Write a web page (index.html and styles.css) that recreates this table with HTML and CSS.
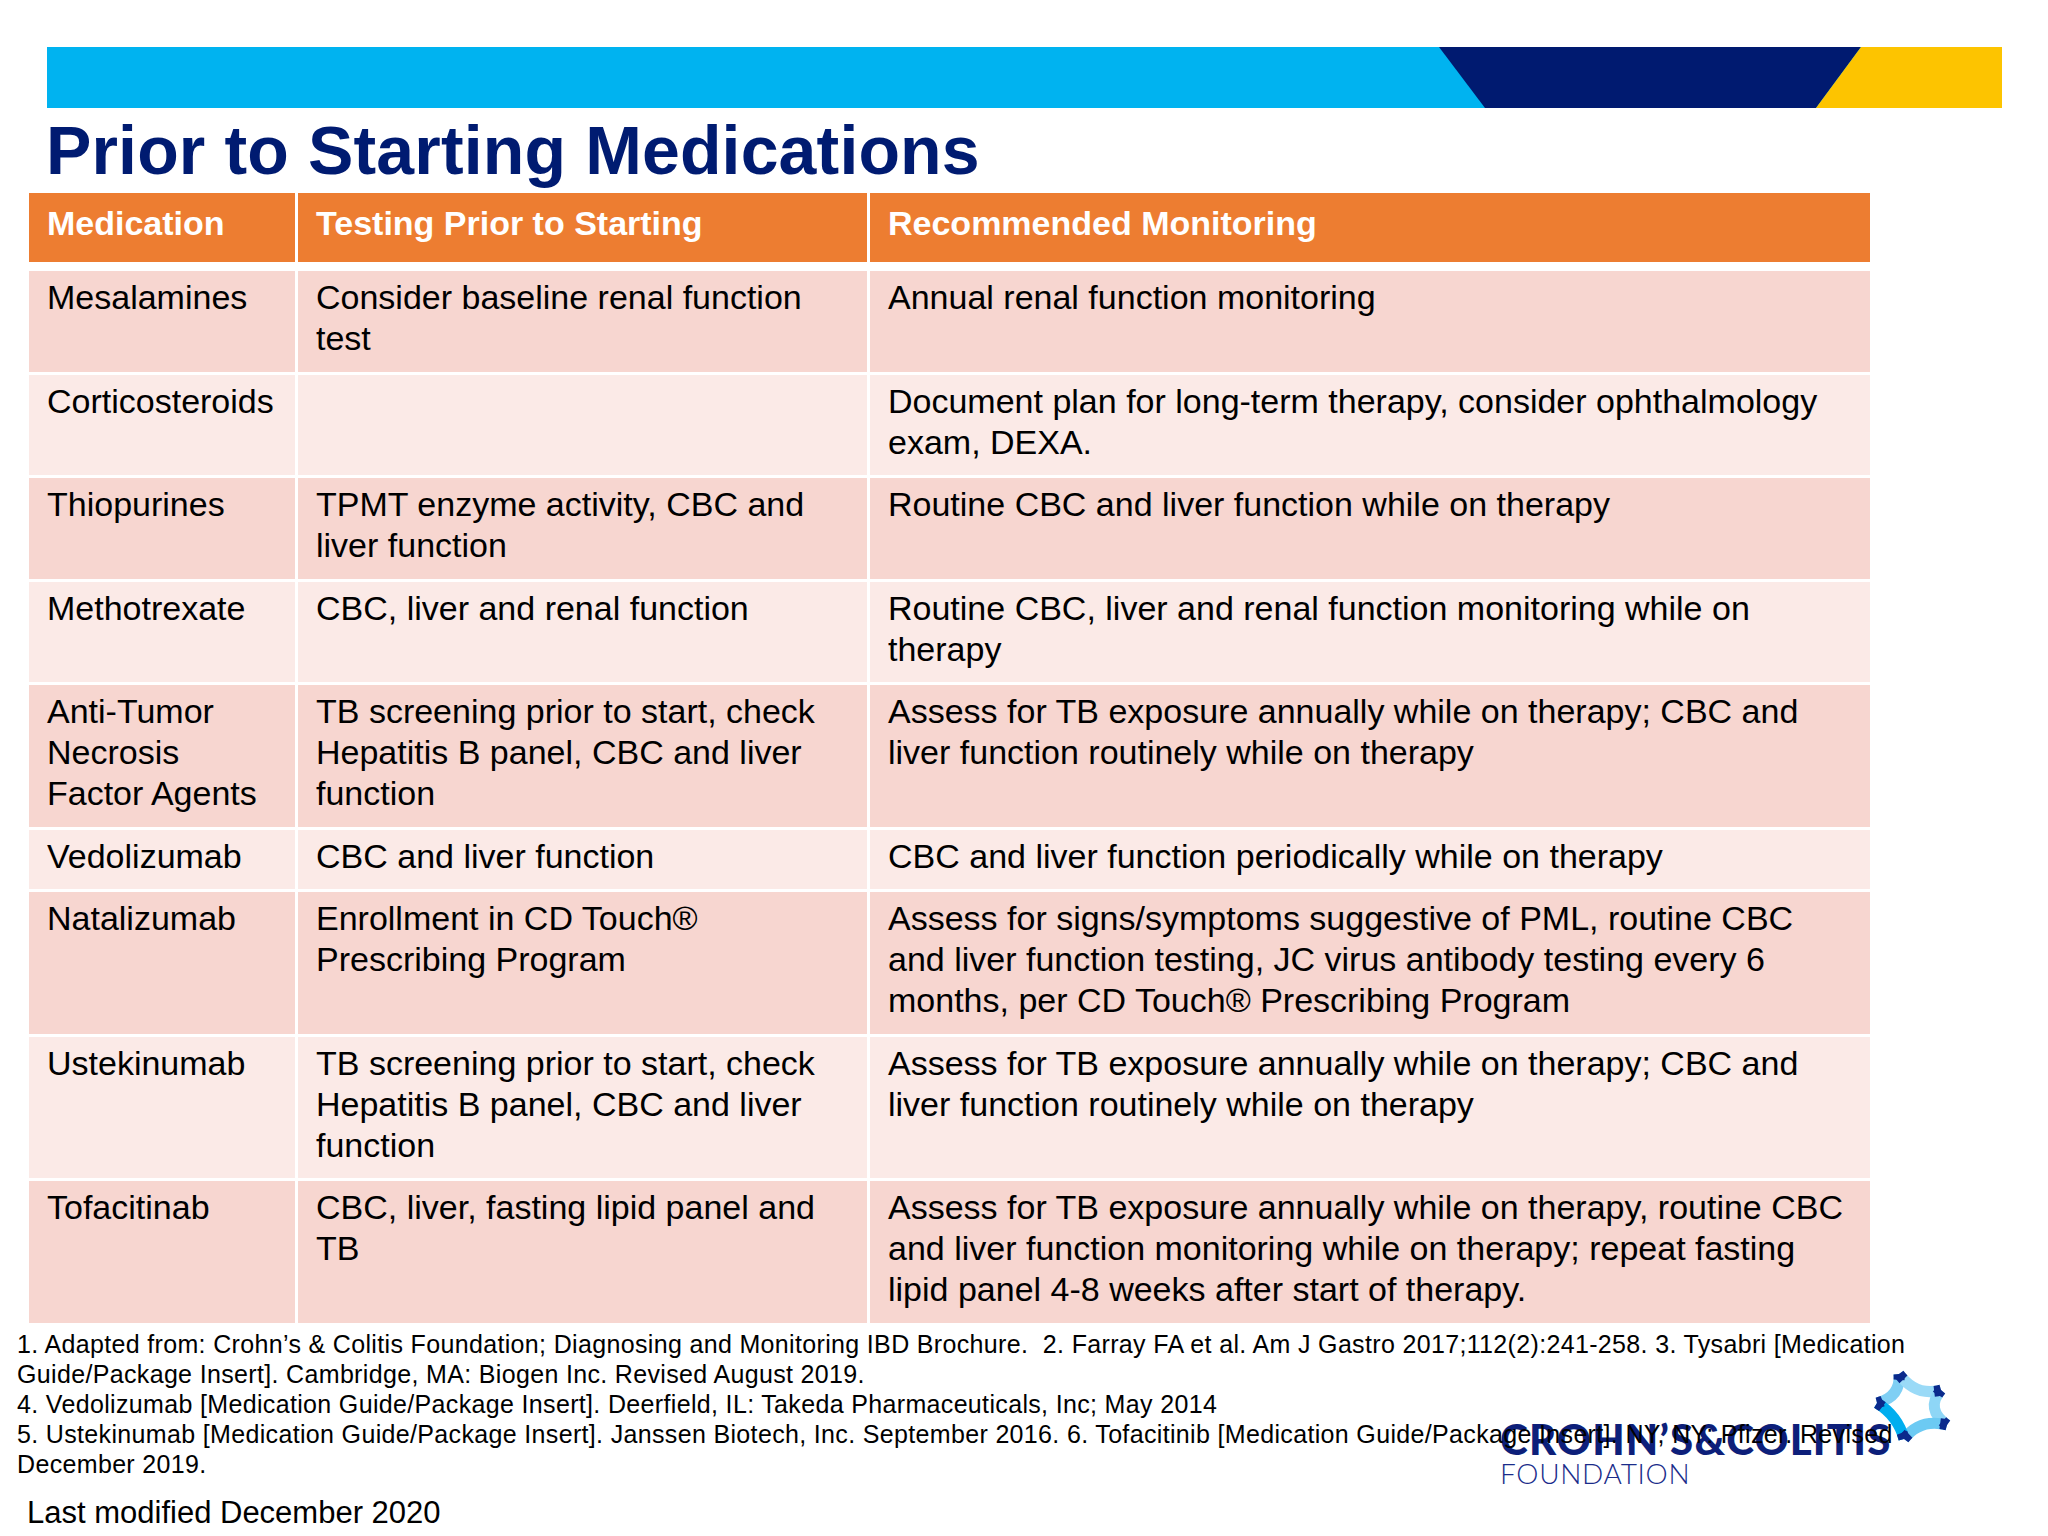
FILE: index.html
```html
<!DOCTYPE html>
<html lang="en">
<head>
<meta charset="utf-8">
<title>Prior to Starting Medications</title>
<link rel="stylesheet" href="styles.css">
</head>
<body>
<div class="slide">
  <svg class="banner" width="1955" height="61" viewBox="0 0 1955 61" aria-hidden="true">
    <rect x="0" y="0" width="1955" height="61" fill="#00B3F0"/>
    <polygon points="1392,0 1814,0 1769,61 1438,61" fill="#001A70"/>
    <polygon points="1814,0 1955,0 1955,61 1769,61" fill="#FDC400"/>
  </svg>

  <h1 class="title">Prior to Starting Medications</h1>

  <div class="table">
    <div class="row head">
      <div class="cell">Medication</div>
      <div class="cell">Testing Prior to Starting</div>
      <div class="cell">Recommended Monitoring</div>
    </div>
    <div class="row odd">
      <div class="cell">Mesalamines</div>
      <div class="cell">Consider baseline renal function test</div>
      <div class="cell">Annual renal function monitoring</div>
    </div>
    <div class="row even">
      <div class="cell">Corticosteroids</div>
      <div class="cell"></div>
      <div class="cell">Document plan for long-term therapy, consider ophthalmology exam, DEXA.</div>
    </div>
    <div class="row odd">
      <div class="cell">Thiopurines</div>
      <div class="cell">TPMT enzyme activity, CBC and liver function</div>
      <div class="cell">Routine CBC and liver function while on therapy</div>
    </div>
    <div class="row even">
      <div class="cell">Methotrexate</div>
      <div class="cell">CBC, liver and renal function</div>
      <div class="cell">Routine CBC, liver and renal function monitoring while on therapy</div>
    </div>
    <div class="row odd">
      <div class="cell">Anti-Tumor Necrosis Factor Agents</div>
      <div class="cell">TB screening prior to start, check Hepatitis B panel, CBC and liver function</div>
      <div class="cell">Assess for TB exposure annually while on therapy; CBC and liver function routinely while on therapy</div>
    </div>
    <div class="row even">
      <div class="cell">Vedolizumab</div>
      <div class="cell">CBC and liver function</div>
      <div class="cell">CBC and liver function periodically while on therapy</div>
    </div>
    <div class="row odd">
      <div class="cell">Natalizumab</div>
      <div class="cell">Enrollment in CD Touch® Prescribing Program</div>
      <div class="cell">Assess for signs/symptoms suggestive of PML, routine CBC and liver function testing, JC virus antibody testing every 6 months, per CD Touch® Prescribing Program</div>
    </div>
    <div class="row even">
      <div class="cell">Ustekinumab</div>
      <div class="cell">TB screening prior to start, check Hepatitis B panel, CBC and liver function</div>
      <div class="cell">Assess for TB exposure annually while on therapy; CBC and liver function routinely while on therapy</div>
    </div>
    <div class="row odd">
      <div class="cell">Tofacitinab</div>
      <div class="cell">CBC, liver, fasting lipid panel and TB</div>
      <div class="cell">Assess for TB exposure annually while on therapy, routine CBC and liver function monitoring while on therapy; repeat fasting lipid panel 4-8 weeks after start of therapy.</div>
    </div>
  </div>

  <div class="logo" aria-label="Crohn's &amp; Colitis Foundation">
    <div class="logo-name">CROHN’S&amp;COLITIS</div>
    <div class="logo-sub">FOUNDATION</div>
  </div>
  <svg class="logo-mark" width="90" height="82" viewBox="0 0 90 82" aria-hidden="true">
    <path d="M9,37 Q33,31 31,8" fill="none" stroke="#7FCFF4" stroke-width="11"/>
    <path d="M31,8 Q48,31 73,24" fill="none" stroke="#9ADAF7" stroke-width="11"/>
    <path d="M73,24 Q57,43 79,59" fill="none" stroke="#8ED6F6" stroke-width="11"/>
    <path d="M79,59 Q52,52 36,73" fill="none" stroke="#6CCAF3" stroke-width="11"/>
    <path d="M36,73 Q30,50 9,37" fill="none" stroke="#00AEEF" stroke-width="11"/>
    <g fill="none" stroke="#0B2A8C" stroke-width="11" stroke-dasharray="14 72 14">
      <path pathLength="100" d="M9,37 Q33,31 31,8"/>
      <path pathLength="100" d="M31,8 Q48,31 73,24"/>
      <path pathLength="100" d="M73,24 Q57,43 79,59"/>
      <path pathLength="100" d="M79,59 Q52,52 36,73"/>
      <path pathLength="100" d="M36,73 Q30,50 9,37"/>
    </g>
  </svg>

  <div class="notes">
    <p class="refs">1. Adapted from: Crohn’s &amp; Colitis Foundation; Diagnosing and Monitoring IBD Brochure.&nbsp; 2. Farray FA et al. Am J Gastro 2017;112(2):241-258. 3. Tysabri [Medication Guide/Package Insert]. Cambridge, MA: Biogen Inc. Revised August 2019.<br>4. Vedolizumab [Medication Guide/Package Insert]. Deerfield, IL: Takeda Pharmaceuticals, Inc; May 2014<br>5. Ustekinumab [Medication Guide/Package Insert]. Janssen Biotech, Inc. September 2016. 6. Tofacitinib [Medication Guide/Package Insert]. NY, NY: Pfizer. Revised December 2019.</p>
    <p class="modified">Last modified December 2020</p>
  </div>
</div>
</body>
</html>
```

FILE: styles.css
```css
html, body {
  margin: 0;
  padding: 0;
  background: #ffffff;
}

body {
  font-family: "Liberation Sans", Arial, sans-serif;
  color: #000000;
}

.slide {
  position: relative;
  width: 2048px;
  height: 1536px;
  overflow: hidden;
  padding-top: 47px;
  box-sizing: border-box;
}

.banner {
  display: block;
  margin-left: 47px;
}

.title {
  margin: 9px 0 0 46px;
  font-size: 68px;
  line-height: 67px;
  font-weight: 700;
  color: #001B71;
  letter-spacing: 0.15px;
}

.table {
  margin: 9px 0 0 29px;
  width: 1841px;
  display: flex;
  flex-direction: column;
  gap: 3px;
}

.row {
  display: grid;
  grid-template-columns: 266px 569px 1000px;
  column-gap: 3px;
  font-size: 34px;
  line-height: 41px;
}

.cell {
  padding: 6px 10px 12.5px 18px;
}

.row .cell:last-child {
  padding-right: 20px;
}

.head {
  margin-bottom: 6px;
}

.head .cell {
  background: #ED7D31;
  color: #ffffff;
  font-weight: 700;
  padding-top: 10px;
  padding-bottom: 18px;
}

.odd .cell {
  background: #F7D6D0;
}

.even .cell {
  background: #FBEAE7;
}

.notes {
  position: relative;
  z-index: 2;
}

.refs {
  margin: 6px 0 0 0;
  padding-left: 17px;
  width: 1925px;
  font-size: 25px;
  line-height: 30px;
  letter-spacing: 0.34px;
}

.modified {
  margin: 16px 0 0 27px;
  font-size: 31px;
  line-height: 36px;
}

.logo {
  position: absolute;
  left: 1500px;
  top: 1418px;
  z-index: 1;
  color: #0D1F7A;
  font-family: Lato, "Liberation Sans", sans-serif;
}

.logo-name {
  font-size: 42px;
  line-height: 42px;
  font-weight: 900;
  letter-spacing: 1.2px;
}

.logo-sub {
  margin-top: -1px;
  font-size: 28px;
  line-height: 28px;
  font-weight: 300;
  letter-spacing: 0.7px;
  color: #1A2C8A;
}

.logo-mark {
  position: absolute;
  left: 1868px;
  top: 1366px;
  z-index: 1;
}
```
